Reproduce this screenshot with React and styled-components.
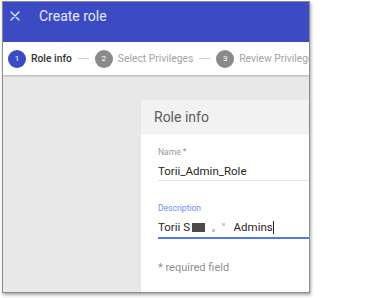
import React from "react";
import styled, { createGlobalStyle } from "styled-components";

const GlobalStyle = createGlobalStyle`
  html, body {
    margin: 0;
    padding: 0;
    background: #ffffff;
  }
  body {
    font-family: Roboto, "Liberation Sans", sans-serif;
  }
`;

const Page = styled.div`
  width: 386px;
  height: 298px;
  padding: 1px 0 0 2px;
  box-sizing: border-box;
`;

const Frame = styled.div`
  width: 308px;
  height: 292px;
  box-sizing: border-box;
  border: 1px solid #8c8c8c;
  box-shadow: 1px 2px 3px rgba(0, 0, 0, 0.35);
  overflow: hidden;
  display: flex;
  flex-direction: column;
  background: #e8e8e8;
`;

const Header = styled.div`
  height: 40px;
  box-sizing: border-box;
  flex-shrink: 0;
  background: #3a4bc4;
  display: flex;
  align-items: flex-start;
  padding: 6px 0 0 7px;
  gap: 19px;
`;

const Title = styled.span`
  color: #e6e9ff;
  font-size: 14px;
  line-height: 16px;
  font-weight: 400;
`;

const CloseIcon = styled.svg`
  width: 10px;
  height: 10px;
  margin-top: 3px;
`;

const StepBar = styled.div`
  height: 33px;
  flex-shrink: 0;
  background: #ffffff;
  box-shadow: 0 1px 2px rgba(0, 0, 0, 0.25);
  display: flex;
  align-items: center;
  padding-left: 5px;
  white-space: nowrap;
  position: relative;
  z-index: 1;
`;

const Step = styled.div`
  display: flex;
  align-items: center;
  gap: 5px;
  flex-shrink: 0;
`;

const StepCircle = styled.span`
  width: 18px;
  height: 18px;
  flex-shrink: 0;
  border-radius: 50%;
  background: ${(p) => (p.active ? "#3a4bc4" : "#8a8a8a")};
  color: #ffffff;
  font-size: 8px;
  display: flex;
  align-items: center;
  justify-content: center;
`;

const StepLabel = styled.span`
  font-size: 10.3px;
  font-weight: ${(p) => (p.active ? 500 : 400)};
  color: ${(p) => (p.active ? "#333333" : "#a3a3a3")};
`;

const Connector = styled.span`
  width: 11px;
  height: 1px;
  flex-shrink: 0;
  background: #cfcfcf;
  margin: 0 6px 0 6px;
`;

const Content = styled.div`
  flex: 1;
  padding: 25px 0 0 138px;
  display: flex;
`;

const Card = styled.div`
  width: 200px;
  flex-shrink: 0;
  background: #ffffff;
  display: flex;
  flex-direction: column;
`;

const CardHeader = styled.div`
  height: 34px;
  box-sizing: border-box;
  background: #f2f2f2;
  border-bottom: 1px solid #ebebeb;
  display: flex;
  align-items: center;
  padding-left: 13px;
  font-size: 14px;
  color: #5c5c5c;
`;

const CardBody = styled.div`
  padding: 13px 0 0 17px;
  display: flex;
  flex-direction: column;
`;

const Field = styled.div`
  display: flex;
  flex-direction: column;
  margin-bottom: ${(p) => p.gapBelow}px;
`;

const FieldLabel = styled.span`
  font-size: 8.5px;
  color: ${(p) => (p.focused ? "#6c8ef0" : "#9a9a9a")};
  line-height: 10px;
`;

const FieldValue = styled.div`
  font-size: 11.5px;
  color: #262626;
  line-height: 14px;
  padding: 7px 0 ${(p) => (p.focused ? 3 : 2)}px;
  border-bottom: ${(p) => (p.focused ? "2px solid #4f7de8" : "1px solid #e3e3e3")};
  display: flex;
  align-items: center;
  white-space: pre;
`;

const Redact = styled.span`
  display: inline-block;
  width: ${(p) => p.w}px;
  height: ${(p) => p.h}px;
  background: ${(p) => p.color};
  margin-left: ${(p) => p.ml}px;
  transform: translateY(${(p) => p.dy || 0}px);
`;

const Cursor = styled.span`
  display: inline-block;
  width: 1px;
  height: 13px;
  background: #222222;
`;

const Note = styled.span`
  font-size: 11px;
  line-height: 12px;
  color: #8f8f8f;
`;

const steps = [
  { n: 1, label: "Role info", active: true },
  { n: 2, label: "Select Privileges" },
  { n: 3, label: "Review Privileges" },
];

export default function App() {
  return (
    <>
      <GlobalStyle />
      <Page>
        <Frame>
          <Header>
            <CloseIcon viewBox="0 0 10 10">
              <path d="M1 1 L9 9 M9 1 L1 9" stroke="#e6e9ff" strokeWidth="1.3" strokeLinecap="round" />
            </CloseIcon>
            <Title>Create role</Title>
          </Header>
          <StepBar>
            {steps.map((s, i) => (
              <React.Fragment key={s.n}>
                {i > 0 && <Connector />}
                <Step>
                  <StepCircle active={s.active}>{s.n}</StepCircle>
                  <StepLabel active={s.active}>{s.label}</StepLabel>
                </Step>
              </React.Fragment>
            ))}
          </StepBar>
          <Content>
            <Card>
              <CardHeader>Role info</CardHeader>
              <CardBody>
                <Field gapBelow={22}>
                  <FieldLabel>Name *</FieldLabel>
                  <FieldValue>Torii_Admin_Role</FieldValue>
                </Field>
                <Field gapBelow={23}>
                  <FieldLabel focused>Description</FieldLabel>
                  <FieldValue focused>
                    {"Torii S"}
                    <Redact w={13} h={9} color="#4a4a4a" ml={2} />
                    <Redact w={3} h={3} color="#c8c8c8" ml={7} dy={3} />
                    <Redact w={3} h={3} color="#d0d0d0" ml={7} dy={-3} />
                    {"   Admins"}
                    <Cursor />
                  </FieldValue>
                </Field>
                <Note>* required field</Note>
              </CardBody>
            </Card>
          </Content>
        </Frame>
      </Page>
    </>
  );
}
